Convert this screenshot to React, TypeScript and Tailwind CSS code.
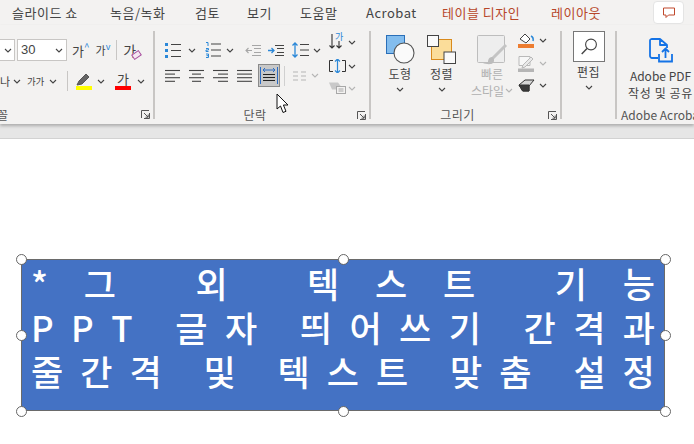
import React from 'react';

const KR = 'font-["Noto_Sans_CJK_KR","Noto_Sans",sans-serif]';

const Chev: React.FC<{ light?: boolean; className?: string }> = ({ light, className = '' }) => (
  <svg width="8" height="5" viewBox="0 0 8 5" className={className}>
    <path d="M1 1l3 3 3-3" fill="none" stroke={light ? '#b5b5b5' : '#444'} strokeWidth="1.1" />
  </svg>
);

const Launcher = () => (
  <svg width="9" height="9" viewBox="0 0 9 9">
    <path d="M.5 8V.5H8M8.5 3v5.5H3M3 3l4 4M7.2 4.5v2.7H4.5" fill="none" stroke="#555" strokeWidth="1" />
  </svg>
);

// lines of a text-align glyph: [x1, x2] per row
const Lines: React.FC<{ rows: number[][]; color?: string }> = ({ rows, color = '#444' }) => (
  <svg width="16" height="14" viewBox="0 0 16 14">
    {rows.map((r, i) => (
      <path key={i} d={`M${r[0]} ${1.5 + i * 3.6}H${r[1]}`} stroke={color} strokeWidth="1.1" />
    ))}
  </svg>
);

const Bullets = () => (
  <svg width="17" height="15" viewBox="0 0 17 15">
    <path d="M0 0h3v3H0zM0 6h3v3H0zM0 12h3v3H0z" fill="#2b88d8" />
    <path d="M6 1.5h10M6 7.5h10M6 13.5h10" stroke="#444" strokeWidth="1.1" />
  </svg>
);

const Numbers = () => (
  <svg width="17" height="16" viewBox="0 0 17 16">
    <path d="M1 0.5h2v3.5M1 6.5h2.5v1.5H1v1.5h2.5M1 12h2.5v3.500H1M1.500 13.700h2" fill="none" stroke="#2b88d8" strokeWidth="1" />
    <path d="M6 2h10M6 8h10M6 14h10" stroke="#444" strokeWidth="1.1" />
  </svg>
);

const Indent: React.FC<{ out?: boolean }> = ({ out }) => (
  <svg width="16" height="13" viewBox="0 0 16 13">
    <path d="M7 1.500h9M9 4.500h7M9 8.500h7M7 11.500h9" stroke={out ? '#a6a6a6' : '#444'} strokeWidth="1.1" />
    {out ? (
      <path d="M7 6.500H1M3.500 4L1 6.500 3.500 9" fill="none" stroke="#a6a6a6" strokeWidth="1.1" />
    ) : (
      <path d="M0 6.500h6M3.500 4L6 6.500 3.500 9" fill="none" stroke="#2b88d8" strokeWidth="1.300" />
    )}
  </svg>
);

const LineSpacing = () => (
  <svg width="17" height="16" viewBox="0 0 17 16">
    <path d="M3 1v14M.5 3.500L3 1l2.500 2.500M.5 12.500L3 15l2.500-2.500" fill="none" stroke="#2b88d8" strokeWidth="1.300" />
    <path d="M8 2.500h9M8 8h9M8 13.500h9" stroke="#444" strokeWidth="1.100" />
  </svg>
);

const Shapes = () => (
  <svg width="29" height="29" viewBox="0 0 29 29">
    <rect x=".5" y=".5" width="18" height="18" fill="#83bdee" stroke="#2a6fb8" />
    <circle cx="18" cy="18" r="10" fill="#fafafa" stroke="#555" strokeWidth="1.100" />
  </svg>
);

const Arrange = () => (
  <svg width="29" height="29" viewBox="0 0 29 29">
    <rect x="4.500" y="4.500" width="20" height="20" fill="#fbdd9a" stroke="#d98a1c" />
    <rect x=".5" y=".5" width="11" height="11" fill="#fafafa" stroke="#444" />
    <rect x="17" y="17" width="11.500" height="11.500" fill="#fafafa" stroke="#444" />
  </svg>
);

const QuickStyle = () => (
  <svg width="31" height="31" viewBox="0 0 31 31">
    <rect x=".5" y=".5" width="27" height="27" rx="1" fill="#eeeeee" stroke="#bdbdbd" />
    <path d="M29 10L15 24" stroke="#c4c4c4" strokeWidth="3" />
    <path d="M15 22c-3 0-4 3-4 5-2 1-5 1-5 1 2 1 8 2 10 0 2-2 1-5-1-6z" fill="#bcbcbc" />
  </svg>
);

const Bucket = () => (
  <svg width="17" height="15" viewBox="0 0 17 15">
    <path d="M2 6l5-5 5 5-4 4z" fill="#fff" stroke="#444" />
    <path d="M13 3c2 1 2.500 3 2 5" fill="none" stroke="#2b88d8" strokeWidth="1.500" />
    <path d="M0 11h16v4H0z" fill="#ed7d31" />
  </svg>
);

const Outline = () => (
  <svg width="17" height="17" viewBox="0 0 17 17">
    <path d="M1 1.500h11v9H1z" fill="#f7f7f7" stroke="#b9b9b9" />
    <path d="M5 10l8-8 2 2-8 8-3 1z" fill="#e9e9e9" stroke="#b9b9b9" />
    <path d="M0 13.500h16V17H0z" fill="#b5b5b5" />
  </svg>
);

const Eraser = () => (
  <svg width="17" height="13" viewBox="0 0 17 13">
    <path d="M1 6l6-5h9l-5 6v5H5z" fill="#d6d6d6" stroke="#333" />
    <path d="M1 6h10v6H4.500z" fill="#3a3a3a" stroke="#333" />
  </svg>
);

const Magnifier = () => (
  <svg width="16" height="17" viewBox="0 0 16 17">
    <circle cx="10" cy="6.500" r="5.400" fill="none" stroke="#444" strokeWidth="1.100" />
    <path d="M6 10.500L.7 16" stroke="#444" strokeWidth="1.400" />
  </svg>
);

const AdobeShare = () => (
  <svg width="24" height="25" viewBox="0 0 24 25">
    <path
      d="M9 20H3c-1 0-2-1-2-2V2.500C1 1.500 2 1 3 1h8l7 6v3M11 1v6h7"
      fill="none"
      stroke="#1473e6"
      strokeWidth="1.800"
      strokeLinejoin="round"
    />
    <path d="M10 16v7.500h13V16M16.500 20v-9M13 14l3.500-3.500L20 14" fill="none" stroke="#1473e6" strokeWidth="1.800" />
  </svg>
);

const Comment = () => (
  <svg width="12" height="12" viewBox="0 0 12 12">
    <path d="M.5 1h11v7H5.500l-2.500 2.500V8H.5z" fill="none" stroke="#c0492c" strokeWidth="1" />
  </svg>
);

const TextDirection = () => (
  <span className="relative flex w-[17px] h-[16px]">
    <svg width="17" height="16" viewBox="0 0 17 16">
      <path d="M3 0v14M.5 11.500L3 14l2.500-2.500M10 7v7M7.500 11.500L10 14l2.500-2.500" fill="none" stroke="#333" strokeWidth="1.100" />
    </svg>
    <span className="absolute left-[6px] -top-[3px] text-[9px] leading-[12px] text-[#2b88d8]">가</span>
  </span>
);

const AlignText = () => (
  <svg width="17" height="14" viewBox="0 0 17 14">
    <path d="M4 1.500H.5v11H4M13 1.500h3.500v11H13" fill="none" stroke="#333" strokeWidth="1" />
    <path d="M8.500 0v14M6 2.500L8.500 0 11 2.500M6 11.500L8.500 14 11 11.500" fill="none" stroke="#2b88d8" strokeWidth="1.200" />
  </svg>
);

const SmartArt = () => (
  <svg width="17" height="12" viewBox="0 0 17 12">
    <path d="M0 .5h9l3 4-3 3H3z" fill="#c9c9c9" />
    <rect x="7.500" y="4.500" width="9" height="7" fill="#f3f2f1" stroke="#a8a8a8" />
    <path d="M9.500 7h5M9.500 9h5" stroke="#a8a8a8" />
  </svg>
);

const Tab: React.FC<{ label: string; w: string; red?: boolean }> = ({ label, w, red }) => (
  <span className={`${w} shrink-0 text-[13px] tracking-[0.5px] whitespace-nowrap ${red ? 'text-[#b7472a]' : 'text-[#444]'}`}>{label}</span>
);

const Sep = () => <div className="w-[2px] h-[88px] mt-[6px] bg-[#c8c6c4] shrink-0" />;

const GroupLabel: React.FC<{ label: string; pr: string }> = ({ label, pr }) => (
  <div className={`mt-auto h-[19px] flex items-center justify-center relative text-[12px] tracking-[0.5px] text-[#555] ${pr}`}>
    {label}
    <span className="absolute right-[3px] top-[6px] flex">
      <Launcher />
    </span>
  </div>
);

const Handle: React.FC<{ pos: string }> = ({ pos }) => (
  <span className={`absolute ${pos} w-[11px] h-[11px] rounded-full bg-white border-[1.500px] border-[#666]`} />
);

const TextLine: React.FC<{ chars: string }> = ({ chars }) => (
  <div className="flex justify-between h-[44px] items-center">
    {Array.from(chars).map((c, i) => (
      <span key={i} className="whitespace-pre">{c}</span>
    ))}
  </div>
);

export default function App() {
  return (
    <div className={`relative w-[694px] h-[444px] overflow-hidden flex flex-col bg-white ${KR}`}>
      {/* tabs */}
      <div className="h-[25px] bg-[#f3f2f1] flex items-center pl-[12px] shrink-0">
        <Tab label="슬라이드 쇼" w="w-[98px]" />
        <Tab label="녹음/녹화" w="w-[85px]" />
        <Tab label="검토" w="w-[52px]" />
        <Tab label="보기" w="w-[53px]" />
        <Tab label="도움말" w="w-[66px]" />
        <Tab label="Acrobat" w="w-[76px]" />
        <Tab label="테이블 디자인" w="w-[109px]" red />
        <Tab label="레이아웃" w="w-[102px]" red />
        <div className="w-[31px] h-[23px] bg-white rounded-sm border border-[#e4e4e4] flex items-center justify-center">
          <Comment />
        </div>
      </div>

      {/* ribbon */}
      <div className="h-[99px] bg-[#f3f2f1] flex shrink-0 overflow-hidden shadow-[0_2px_3px_rgba(0,0,0,0.25)] z-10 relative">
        {/* font group, cut off on the left */}
        <div className="w-[153px] shrink-0 flex flex-col">
          <div className="flex items-center mt-[14px] h-[22px]">
            <div className="w-[15px] h-[22px] bg-white border-y border-r border-[#c8c6c4] flex items-center pl-[4px]">
              <Chev />
            </div>
            <div className="ml-[2px] w-[50px] h-[22px] bg-white border border-[#c8c6c4] flex items-center justify-between pl-[3px] pr-[3px] text-[13px] text-[#444]">
              <span className="font-['Liberation_Sans']">30</span>
              <Chev />
            </div>
            <span className="ml-[5px] text-[13px] text-[#444] leading-none">가<sup className="text-[10px] text-[#2b88d8]">^</sup></span>
            <span className="ml-[6px] text-[11px] text-[#444] leading-none">가<sup className="text-[9px] text-[#2b88d8]">v</sup></span>
            <div className="ml-[6px] w-px h-[20px] bg-[#c8c6c4]" />
            <span className="ml-[6px] relative text-[14px] text-[#444] leading-none">
              가
              <span className="absolute left-[9px] top-[9px] w-[9px] h-[6px] rotate-[-35deg] bg-[#f3e6f1] border border-[#a64d9d]" />
            </span>
          </div>
          <div className="flex items-center mt-[9px] h-[22px]">
            <span className="w-[10px] overflow-hidden text-[11px] text-[#444] flex justify-end leading-none">나</span>
            <Chev className="ml-[3px]" />
            <span className="ml-[6px] text-[9.500px] text-[#444] tracking-tight">가가</span>
            <Chev className="ml-[5px]" />
            <div className="ml-[10px] w-px h-[20px] bg-[#c8c6c4]" />
            <div className="ml-[7px] w-[17px] flex flex-col items-center">
              <svg width="15" height="13" viewBox="0 0 15 13">
                <path d="M1 12l2-4 7-7 3 3-7 7z" fill="#666" stroke="#555" />
              </svg>
              <div className="w-[16px] h-[4px] bg-[#ffff00]" />
            </div>
            <Chev className="ml-[5px]" />
            <div className="ml-[10px] w-[16px] flex flex-col items-center text-[13px] leading-[14px] text-[#444]">
              가
              <div className="w-[16px] h-[4px] bg-[#ff0000]" />
            </div>
            <Chev className="ml-[6px]" />
          </div>
          <div className="mt-auto h-[19px] flex items-center justify-between pr-[3px] text-[12px] text-[#555]">
            <span className="-ml-[3px]">꼴</span>
            <Launcher />
          </div>
        </div>
        <Sep />

        {/* paragraph group */}
        <div className="w-[214px] shrink-0 flex flex-col">
          <div className="flex">
            <div className="w-[174px] shrink-0">
              <div className="flex items-center mt-[16px] h-[18px] pl-[10px]">
                <Bullets />
                <Chev className="ml-[6px]" />
                <span className="ml-[9px] flex"><Numbers /></span>
                <Chev className="ml-[4px]" />
                <span className="ml-[11px] flex"><Indent out /></span>
                <span className="ml-[7px] flex"><Indent /></span>
                <span className="ml-[8px] flex"><LineSpacing /></span>
                <Chev className="ml-[4px]" />
              </div>
              <div className="flex items-center mt-[5px] h-[23px] pl-[10px]">
                <Lines rows={[[0, 15], [0, 10], [0, 15], [0, 10]]} />
                <span className="ml-[8px] flex"><Lines rows={[[0, 15], [3, 12], [0, 15], [3, 12]]} /></span>
                <span className="ml-[8px] flex"><Lines rows={[[0, 15], [5, 15], [0, 15], [5, 15]]} /></span>
                <span className="ml-[8px] flex"><Lines rows={[[0, 15], [0, 15], [0, 15], [0, 15]]} /></span>
                <div className="ml-[5px] w-[22px] h-[23px] bg-[#c8c8c8] border border-[#8a8a8a] flex items-center justify-center">
                  <svg width="18" height="17" viewBox="0 0 18 17">
                    <path d="M.5 0v17M17.500 0v17M3 3h12M5 1l-2 2 2 2M13 1l2 2-2 2" fill="none" stroke="#2b6cc4" strokeWidth="1" />
                    <path d="M3 7.500h12M3 10.500h12M3 13.500h12" stroke="#222" strokeWidth="1.200" />
                  </svg>
                </div>
                <div className="ml-[4px] w-px h-[20px] bg-[#d0d0d0]" />
                <span className="ml-[8px] flex">
                  <svg width="14" height="10" viewBox="0 0 14 10">
                    <path d="M0 1h5M0 5h5M0 9h5M8 1h5M8 5h5M8 9h5" stroke="#b5b5b5" strokeWidth="1" />
                  </svg>
                </span>
                <Chev light className="ml-[4px]" />
              </div>
            </div>
            <div className="flex flex-col gap-[9px] mt-[9px] items-start">
              <div className="flex items-center gap-[2px]"><TextDirection /><Chev /></div>
              <div className="flex items-center gap-[2px]"><AlignText /><Chev /></div>
              <div className="flex items-center gap-[2px]"><SmartArt /><Chev light /></div>
            </div>
          </div>
          <GroupLabel label="단락" pr="pr-[14px]" />
        </div>
        <Sep />

        {/* drawing group */}
        <div className="w-[189px] shrink-0 flex flex-col">
          <div className="flex">
            <div className="ml-[8px] w-[42px] flex flex-col items-center pt-[10px] text-[12px] tracking-[0.5px] text-[#444]">
              <Shapes />
              <span className="mt-[1px] leading-[17px]">도형</span>
              <Chev className="mt-[5px]" />
            </div>
            <div className="w-[41px] flex flex-col items-center pt-[10px] text-[12px] tracking-[0.5px] text-[#444]">
              <Arrange />
              <span className="mt-[1px] leading-[17px]">정렬</span>
              <Chev className="mt-[5px]" />
            </div>
            <div className="ml-[6px] w-[48px] flex flex-col items-center pt-[10px] text-[12px] text-[#b0b0b0]">
              <QuickStyle />
              <span className="leading-[17px] -mt-px">빠른</span>
              <span className="leading-[17px] whitespace-nowrap flex items-center gap-[1px]">스타일<Chev light /></span>
            </div>
            <div className="ml-[2px] flex flex-col gap-[7px] pt-[8px]">
              <div className="flex items-center gap-[4px]"><Bucket /><Chev /></div>
              <div className="flex items-center gap-[4px]"><Outline /><Chev light /></div>
              <div className="flex items-center gap-[4px]"><Eraser /><Chev /></div>
            </div>
          </div>
          <GroupLabel label="그리기" pr="pr-[16px]" />
        </div>
        <Sep />

        {/* edit group */}
        <div className="w-[53px] shrink-0 flex flex-col items-center pt-[6px] text-[12px] tracking-[0.5px] text-[#444]">
          <div className="w-[32px] h-[31px] bg-white border border-[#777] flex items-center justify-center">
            <Magnifier />
          </div>
          <span className="mt-[1px] leading-[17px]">편집</span>
          <Chev className="mt-[5px]" />
        </div>
        <Sep />

        {/* acrobat group */}
        <div className="flex-1 flex flex-col text-[12px] text-[#444] overflow-hidden">
          <div className="flex flex-col items-center pt-[13px] w-[87px]">
            <AdobeShare />
            <span className="mt-[4px] leading-[17px] whitespace-nowrap">Adobe PDF</span>
            <span className="leading-[17px] whitespace-nowrap tracking-[0.6px]">작성 및 공유</span>
          </div>
          <div className="mt-auto h-[19px] flex items-center pl-[4px] whitespace-nowrap text-[#555]">Adobe Acrobat</div>
        </div>
      </div>

      {/* band between ribbon and slide */}
      <div className="h-[15px] bg-[#e6e6e6] border-b border-[#d2d2d2] shrink-0" />

      {/* slide with selected table */}
      <div className="flex-1 bg-white pt-[120px] pl-[21px]">
        <div className="relative w-[644px] h-[152px] bg-[#4472c4] border border-[#6a6a6a] text-white text-[35px] font-medium leading-none px-[9px]">
          <TextLine chars="*그 외 텍스트 기능" />
          <TextLine chars="PPT 글자 띄어쓰기 간격과" />
          <TextLine chars="줄간격 및 텍스트 맞춤 설정" />
          <Handle pos="-left-[6.500px] -top-[6.500px]" />
          <Handle pos="left-[316px] -top-[6.500px]" />
          <Handle pos="-right-[6.500px] -top-[6.500px]" />
          <Handle pos="-left-[6.500px] top-[69.500px]" />
          <Handle pos="-right-[6.500px] top-[69.500px]" />
          <Handle pos="-left-[6.500px] -bottom-[6.500px]" />
          <Handle pos="left-[316px] -bottom-[6.500px]" />
          <Handle pos="-right-[6.500px] -bottom-[6.500px]" />
        </div>
      </div>

      {/* mouse pointer */}
      <svg width="14" height="21" viewBox="0 0 14 21" className="absolute left-[276px] top-[93px] z-20">
        <path d="M1 1v15l3.500-3 2.500 6.500 3-1.200-2.600-6.300H12z" fill="#fff" stroke="#111" strokeWidth="1" />
      </svg>
    </div>
  );
}
